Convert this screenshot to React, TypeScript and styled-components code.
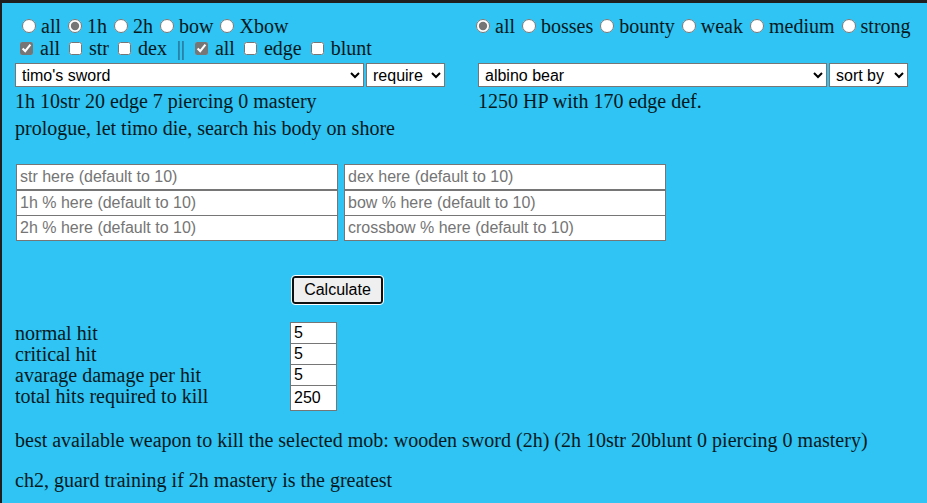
import React from "react";
import styled, { createGlobalStyle } from "styled-components";

const Global = createGlobalStyle`
  html, body { margin: 0; padding: 0; background: #1f1f1f; }
  body { font-family: "Liberation Serif", "Times New Roman", serif; }
`;

const Page = styled.div`
  margin: 3px 0 0 2px;
  min-height: 500px;
  background: #2fc4f3;
  color: #061820;
  font-size: 20px;
  padding: 12px 13px 0 13px;
  box-sizing: border-box;
`;

const Top = styled.div`
  display: flex;
  gap: 33px;
`;

const Col = styled.div`
  width: 430px;
  display: flex;
  flex-direction: column;
`;

const OptRow = styled.div<{ $shift?: number }>`
  display: flex;
  align-items: center;
  height: 22px;
  white-space: nowrap;
  margin-left: ${(p) => p.$shift ?? 0}px;
`;

const Opt = styled.label`
  display: inline-flex;
  align-items: center;
  input {
    margin: 0 5px 0 7px;
    width: 14px;
    height: 14px;
    accent-color: #767676;
  }
`;

const ChkOpt = styled(Opt)`
  input {
    width: 13px;
    height: 13px;
    margin: 0 7px 0 9px;
  }
  &:first-child input { margin-left: 5px; }
`;

const Sep = styled.span`
  margin: 0 1px 0 10px;
  color: #245b70;
`;

const SelRow = styled.div`
  display: flex;
  gap: 2px;
  margin-top: 4px;
`;

const Sel = styled.select<{ $w: number }>`
  width: ${(p) => p.$w}px;
  height: 24px;
  font-family: "Liberation Sans", Arial, sans-serif;
  font-size: 16px;
  border: 1px solid #767676;
  border-radius: 0;
  background: #fff;
  color: #000;
  padding: 0 2px;
`;

const Info = styled.div<{ $mt: number }>`
  line-height: 22px;
  margin-top: ${(p) => p.$mt}px;
`;

const Stats = styled.div`
  display: grid;
  grid-template-columns: 322px 322px;
  column-gap: 6px;
  margin-top: 25px;
  margin-left: 1px;
`;

const StatCol = styled.div`
  display: flex;
  flex-direction: column;
`;

const StatInput = styled.input`
  height: 26px;
  box-sizing: border-box;
  border: 1px solid #767676;
  margin: 0 0 -0.5px 0;
  padding: 0 3px;
  font-family: "Liberation Sans", Arial, sans-serif;
  font-size: 16px;
  &::placeholder { color: #757575; }
`;

const BtnRow = styled.div`
  padding-left: 277px;
  margin-top: 35px;
`;

const CalcBtn = styled.button`
  width: 91px;
  height: 28px;
  font-family: "Liberation Sans", Arial, sans-serif;
  font-size: 16px;
  background: #efefef;
  border: 2px solid #101010;
  border-radius: 3px;
  outline: 1px solid #ffffff;
  color: #000;
`;

const Results = styled.div`
  display: grid;
  grid-template-columns: 275px 47px;
  margin-top: 18px;
  align-items: end;
`;

const Labels = styled.div`
  line-height: 21px;
  padding-bottom: 3px;
`;

const OutCol = styled.div`
  display: flex;
  flex-direction: column;
`;

const Out = styled.input`
  width: 47px;
  height: 22px;
  box-sizing: border-box;
  border: 1px solid #767676;
  margin: 0 0 -1px 0;
  padding: 0 3px;
  font-family: "Liberation Sans", Arial, sans-serif;
  font-size: 16px;
  &:last-child { height: 26px; }
`;

const Para = styled.p<{ $mt: number }>`
  margin: ${(p) => p.$mt}px 0 0 0;
  line-height: 22px;
`;

export default function App() {
  return (
    <>
      <Global />
      <Page>
        <Top>
          <Col>
            <OptRow>
              {["all", "1h", "2h", "bow", "Xbow"].map((t) => (
                <Opt key={t}>
                  <input type="radio" name="w" defaultChecked={t === "1h"} />
                  {t}
                </Opt>
              ))}
            </OptRow>
            <OptRow>
              <ChkOpt><input type="checkbox" defaultChecked />all</ChkOpt>
              <ChkOpt><input type="checkbox" />str</ChkOpt>
              <ChkOpt><input type="checkbox" />dex</ChkOpt>
              <Sep>||</Sep>
              <ChkOpt><input type="checkbox" defaultChecked />all</ChkOpt>
              <ChkOpt><input type="checkbox" />edge</ChkOpt>
              <ChkOpt><input type="checkbox" />blunt</ChkOpt>
            </OptRow>
            <SelRow>
              <Sel $w={349}><option>timo's sword</option></Sel>
              <Sel $w={79}><option>require</option></Sel>
            </SelRow>
            <Info $mt={3}>1h 10str 20 edge 7 piercing 0 mastery</Info>
            <Info $mt={5}>prologue, let timo die, search his body on shore</Info>
          </Col>
          <Col>
            <OptRow $shift={-9}>
              {["all", "bosses", "bounty", "weak", "medium", "strong"].map((t) => (
                <Opt key={t}>
                  <input type="radio" name="m" defaultChecked={t === "all"} />
                  {t}
                </Opt>
              ))}
            </OptRow>
            <OptRow />
            <SelRow>
              <Sel $w={349}><option>albino bear</option></Sel>
              <Sel $w={79}><option>sort by</option></Sel>
            </SelRow>
            <Info $mt={3}>1250 HP with 170 edge def.</Info>
          </Col>
        </Top>
        <Stats>
          <StatCol>
            <StatInput placeholder="str here (default to 10)" />
            <StatInput placeholder="1h % here (default to 10)" />
            <StatInput placeholder="2h % here (default to 10)" />
          </StatCol>
          <StatCol>
            <StatInput placeholder="dex here (default to 10)" />
            <StatInput placeholder="bow % here (default to 10)" />
            <StatInput placeholder="crossbow % here (default to 10)" />
          </StatCol>
        </Stats>
        <BtnRow>
          <CalcBtn>Calculate</CalcBtn>
        </BtnRow>
        <Results>
          <Labels>
            normal hit<br />
            critical hit<br />
            avarage damage per hit<br />
            total hits required to kill
          </Labels>
          <OutCol>
            <Out defaultValue="5" />
            <Out defaultValue="5" />
            <Out defaultValue="5" />
            <Out defaultValue="250" />
          </OutCol>
        </Results>
        <Para $mt={19}>best available weapon to kill the selected mob: wooden sword (2h) (2h 10str 20blunt 0 piercing 0 mastery)</Para>
        <Para $mt={18}>ch2, guard training if 2h mastery is the greatest</Para>
      </Page>
    </>
  );
}
